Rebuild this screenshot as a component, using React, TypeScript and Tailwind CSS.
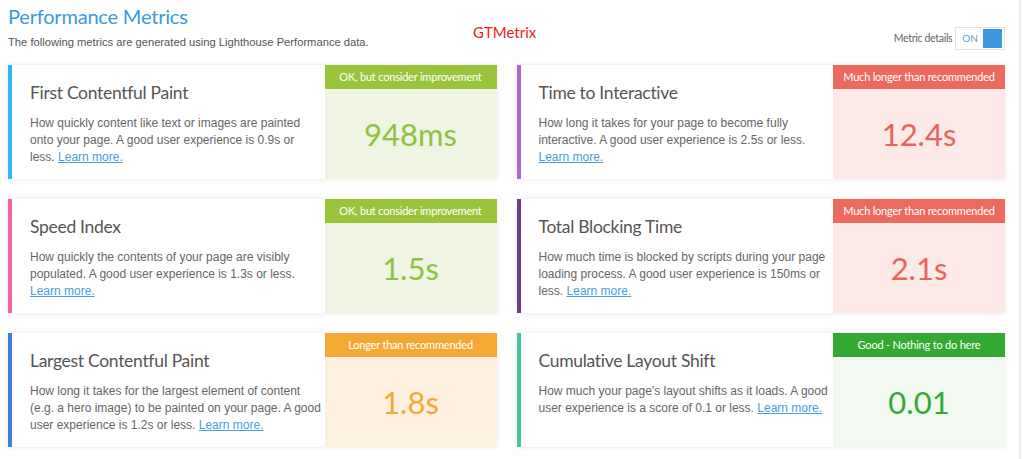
import React from "react";

type Metric = {
  title: string;
  desc: string;
  value: string;
  status: string;
  bar: string;
  tone: "ok" | "bad" | "warn" | "good";
};

const metrics: Metric[] = [
  {
    title: "First Contentful Paint",
    desc: "How quickly content like text or images are painted onto your page. A good user experience is 0.9s or less.",
    value: "948ms",
    status: "OK, but consider improvement",
    bar: "border-[#2db7f5]",
    tone: "ok",
  },
  {
    title: "Time to Interactive",
    desc: "How long it takes for your page to become fully interactive. A good user experience is 2.5s or less.",
    value: "12.4s",
    status: "Much longer than recommended",
    bar: "border-[#ab6ad3]",
    tone: "bad",
  },
  {
    title: "Speed Index",
    desc: "How quickly the contents of your page are visibly populated. A good user experience is 1.3s or less.",
    value: "1.5s",
    status: "OK, but consider improvement",
    bar: "border-[#f262a2]",
    tone: "ok",
  },
  {
    title: "Total Blocking Time",
    desc: "How much time is blocked by scripts during your page loading process. A good user experience is 150ms or less.",
    value: "2.1s",
    status: "Much longer than recommended",
    bar: "border-[#6b3e86]",
    tone: "bad",
  },
  {
    title: "Largest Contentful Paint",
    desc: "How long it takes for the largest element of content (e.g. a hero image) to be painted on your page. A good user experience is 1.2s or less.",
    value: "1.8s",
    status: "Longer than recommended",
    bar: "border-[#3d7ddd]",
    tone: "warn",
  },
  {
    title: "Cumulative Layout Shift",
    desc: "How much your page's layout shifts as it loads. A good user experience is a score of 0.1 or less.",
    value: "0.01",
    status: "Good - Nothing to do here",
    bar: "border-[#46c59b]",
    tone: "good",
  },
];

const tones = {
  ok: { band: "bg-[#9bc43d]", body: "bg-[#eff4e3]", text: "text-[#8dc43f]" },
  bad: { band: "bg-[#ec6a5e]", body: "bg-[#fde9e7]", text: "text-[#ea6458]" },
  warn: { band: "bg-[#f5a935]", body: "bg-[#fdf0de]", text: "text-[#f5a935]" },
  good: { band: "bg-[#33a832]", body: "bg-[#f2f9f0]", text: "text-[#35a933]" },
};

function MetricCard({ m }: { m: Metric }) {
  const t = tones[m.tone];
  return (
    <div className={`flex h-[114px] border-l-4 bg-white shadow-[0_0_6px_rgba(0,0,0,0.09)] ${m.bar}`}>
      <div className="flex-1 pl-[18px] pr-[3px] pt-[17px]">
        <h3 className="font-['Lato'] text-[17.5px] leading-[22px] tracking-[-0.3px] text-[#555]">{m.title}</h3>
        <p className="mt-[11px] text-[12px] leading-[17px] text-[#666]">
          {m.desc}{" "}
          <a href="#" className="text-[#4a9be0] underline">
            Learn more.
          </a>
        </p>
      </div>
      <div className={`flex w-[172px] flex-col ${t.body}`}>
        <div className={`flex h-6 items-center justify-center font-['Lato'] text-[11px] tracking-[-0.2px] text-white ${t.band}`}>
          {m.status}
        </div>
        <div className={`flex flex-1 items-center justify-center font-['Lato'] text-[31px] ${t.text}`}>
          {m.value}
        </div>
      </div>
    </div>
  );
}

export default function App() {
  return (
    <div className="flex h-[459px] w-[1024px] overflow-hidden bg-white font-['Liberation_Sans',Arial,sans-serif]">
      <div className="w-[1019px] pl-2">
        <div className="flex items-start">
          <div className="w-[440px] pt-[3px]">
            <h1 className="font-['Lato'] text-[20px] leading-[26px] tracking-[-0.2px] text-[#3b99dc]">Performance Metrics</h1>
            <p className="mt-[6px] text-[11.2px] leading-[14px] text-[#555]">
              The following metrics are generated using Lighthouse Performance data.
            </p>
          </div>
          <div className="ml-[25px] pt-[21px] font-['Lato'] text-[15px] text-[#f21b1b]">GTMetrix</div>
          <div className="ml-auto mr-[14px] mt-[27px] flex items-center gap-[3px]">
            <span className="font-['Lato'] text-[10.5px] tracking-[-0.3px] text-[#666]">Metric details</span>
            <div className="flex items-center gap-[5px] border border-[#e3e3e3] py-[1px] pl-[6px] pr-[2px]">
              <span className="font-['Lato'] text-[10px] text-[#5aa0dc]">ON</span>
              <div className="h-[19px] w-[19px] bg-[#3c97de]" />
            </div>
          </div>
        </div>
        <div className="mt-[15px] grid w-[997px] grid-cols-2 gap-x-5 gap-y-5">
          {metrics.map((m) => (
            <MetricCard key={m.title} m={m} />
          ))}
        </div>
      </div>
      <div className="w-[2px] bg-[#ececec]" />
    </div>
  );
}
